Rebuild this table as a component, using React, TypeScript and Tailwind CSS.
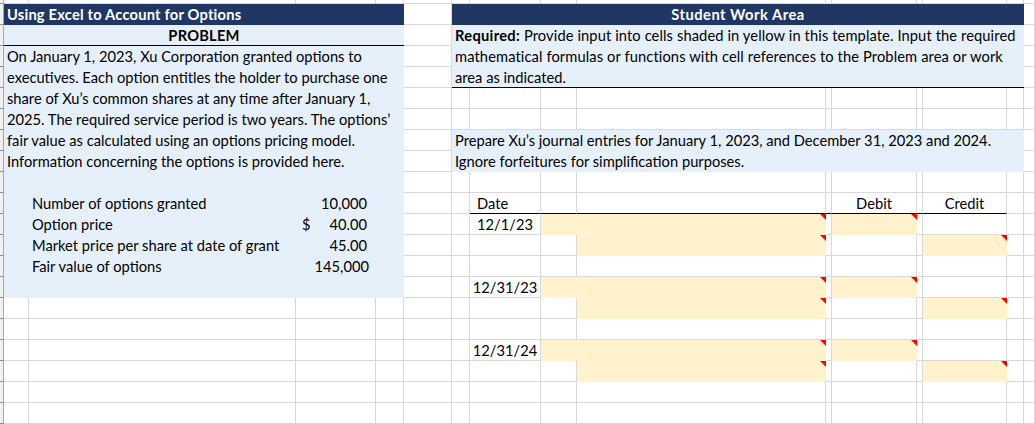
import React from "react";

// gridline cell, same as an empty Excel cell
const GRID = "border-r border-b border-[#d9d9d9]";
const BLUE = "bg-[#e6f0fa]";
const NAVY = "bg-[#203764]";

function Blank({ n = 1 }: { n?: number }) {
  return (
    <>
      {Array.from({ length: n }, (_, i) => (
        <div key={i} className={GRID} />
      ))}
    </>
  );
}

function RowHead() {
  return <div className="bg-[#f1f1f1] border-r border-b border-r-[#a8a8a8] border-b-[#8c8c8c]" />;
}

// red comment marker in the top right corner
function Note() {
  return (
    <svg width="6" height="6" viewBox="0 0 6 6" className="block">
      <polygon points="0,0 6,0 6,6" fill="#ff0000" />
    </svg>
  );
}

function Input({ wide }: { wide?: boolean }) {
  return (
    <div className={`${wide ? "col-span-2" : ""} bg-[#fff2cc] flex justify-end items-start`}>
      <Note />
    </div>
  );
}

function Line({ children, className = "" }: { children?: React.ReactNode; className?: string }) {
  return <div className={`h-[21px] leading-[21px] whitespace-nowrap ${className}`}>{children}</div>;
}

function DataRow({ label, value, dollar, pr }: { label: string; value: string; dollar?: boolean; pr: string }) {
  return (
    <>
      <div className={BLUE} />
      <div className={`${BLUE} pl-[3px] leading-[21px] whitespace-nowrap`}>{label}</div>
      <div className={`${BLUE} flex justify-between leading-[21px] pl-[6px] ${pr}`}>
        <span>{dollar ? "$" : ""}</span>
        <span>{value}</span>
      </div>
      <div className={BLUE} />
    </>
  );
}

// the date cell is centered in column G
function DateCell({ text }: { text?: string }) {
  return <div className={`${GRID} text-center leading-[21px]`}>{text}</div>;
}

export default function App() {
  const paragraph = [
    "On January 1, 2023, Xu Corporation granted options to",
    "executives. Each option entitles the holder to purchase one",
    "share of Xu\u2019s common shares at any time after January 1,",
    "2025. The required service period is two years. The options\u2019",
    "fair value as calculated using an options pricing model.",
    "Information concerning the options is provided here.",
  ];

  return (
    <div className="w-[1035px] h-[424px] overflow-hidden bg-white text-black text-[14.7px] font-['Lato',sans-serif]">
      <div className="grid grid-cols-[4px_25px_267px_80px_28px_48px_18px_71px_36px_249px_6px_85px_6px_84px_17px_11px] grid-rows-[4px_repeat(20,21px)]">
        {/* row 1, partly cut off */}
        <RowHead />
        <Blank n={15} />

        {/* row 2: titles */}
        <RowHead />
        <div className={`col-span-4 ${NAVY} text-white font-bold tracking-[0.2px] pl-[3px] leading-[21px]`}>
          Using Excel to Account for Options
        </div>
        <Blank />
        <div className={`col-span-9 ${NAVY} text-white font-bold tracking-[0.5px] text-center leading-[21px]`}>
          Student Work Area
        </div>
        <Blank />

        {/* row 3 */}
        <RowHead />
        <div className={`col-span-4 ${BLUE} border-b border-black font-bold tracking-[0.2px] text-center leading-[20px]`}>
          PROBLEM
        </div>
        <Blank />
        <div className={`col-span-9 ${BLUE} pl-[3px]`}>
          <Line className="tracking-[0.1px]">
            <span className="font-bold tracking-[0.3px]">Required:</span> Provide input into cells shaded in yellow in this template. Input the required
          </Line>
        </div>
        <Blank />

        {/* row 4 */}
        <RowHead />
        <div className={`col-span-4 ${BLUE} pl-[3px]`}>
          <Line>{paragraph[0]}</Line>
        </div>
        <Blank />
        <div className={`col-span-9 ${BLUE} pl-[3px]`}>
          <Line className="tracking-[0.1px]">mathematical formulas or functions with cell references to the Problem area or work</Line>
        </div>
        <Blank />

        {/* row 5 */}
        <RowHead />
        <div className={`col-span-4 ${BLUE} pl-[3px]`}>
          <Line>{paragraph[1]}</Line>
        </div>
        <Blank />
        <div className={`col-span-9 ${BLUE} pl-[3px] border-b border-black`}>
          <Line className="h-[20px]">area as indicated.</Line>
        </div>
        <Blank />

        {/* rows 6-7 */}
        <RowHead />
        <div className={`col-span-4 ${BLUE} pl-[3px]`}>
          <Line>{paragraph[2]}</Line>
        </div>
        <Blank n={11} />

        <RowHead />
        <div className={`col-span-4 ${BLUE} pl-[3px]`}>
          <Line>{paragraph[3]}</Line>
        </div>
        <Blank n={11} />

        {/* rows 8-9: instructions */}
        <RowHead />
        <div className={`col-span-4 ${BLUE} pl-[3px]`}>
          <Line>{paragraph[4]}</Line>
        </div>
        <Blank />
        <div className={`col-span-9 ${BLUE} pl-[3px]`}>
          <Line>Prepare Xu&rsquo;s journal entries for January 1, 2023, and December 31, 2023 and 2024.</Line>
        </div>
        <Blank />

        <RowHead />
        <div className={`col-span-4 ${BLUE} pl-[3px]`}>
          <Line>{paragraph[5]}</Line>
        </div>
        <Blank />
        <div className={`col-span-9 ${BLUE} pl-[3px]`}>
          <Line>Ignore forfeitures for simplification purposes.</Line>
        </div>
        <Blank />

        {/* row 10 */}
        <RowHead />
        <div className={`col-span-4 ${BLUE}`} />
        <Blank n={11} />

        {/* row 11: table header */}
        <RowHead />
        <DataRow label="Number of options granted" value="10,000" pr="pr-[9px]" />
        <Blank n={2} />
        <div className="border-r border-b border-r-[#d9d9d9] border-b-black pl-[7px] leading-[21px]">Date</div>
        <div className="border-r border-b border-r-[#d9d9d9] border-b-black" />
        <div className="border-r border-b border-r-[#d9d9d9] border-b-black" />
        <div className="border-r border-b border-r-[#d9d9d9] border-b-black" />
        <div className="border-r border-b border-r-[#d9d9d9] border-b-black text-center leading-[21px]">Debit</div>
        <div className="border-r border-b border-r-[#d9d9d9] border-b-black" />
        <div className="border-r border-b border-r-[#d9d9d9] border-b-black text-center leading-[21px]">Credit</div>
        <Blank n={2} />

        {/* row 12 */}
        <RowHead />
        <DataRow label="Option price" value="40.00" dollar pr="pr-[9px]" />
        <Blank n={2} />
        <DateCell text="12/1/23" />
        <Input wide />
        <Blank />
        <Input />
        <Blank n={4} />

        {/* row 13 */}
        <RowHead />
        <DataRow label="Market price per share at date of grant" value="45.00" pr="pr-[9px]" />
        <Blank n={4} />
        <Input />
        <Blank n={3} />
        <Input />
        <Blank n={2} />

        {/* row 14 */}
        <RowHead />
        <DataRow label="Fair value of options" value="145,000" pr="pr-[7px]" />
        <Blank n={11} />

        {/* row 15 */}
        <RowHead />
        <div className={`col-span-4 ${BLUE}`} />
        <Blank n={2} />
        <DateCell text="12/31/23" />
        <Input wide />
        <Blank />
        <Input />
        <Blank n={4} />

        {/* row 16 */}
        <RowHead />
        <Blank n={8} />
        <Input />
        <Blank n={3} />
        <Input />
        <Blank n={2} />

        {/* row 17 */}
        <RowHead />
        <Blank n={15} />

        {/* row 18 */}
        <RowHead />
        <Blank n={6} />
        <DateCell text="12/31/24" />
        <Input wide />
        <Blank />
        <Input />
        <Blank n={4} />

        {/* row 19 */}
        <RowHead />
        <Blank n={8} />
        <Input />
        <Blank n={3} />
        <Input />
        <Blank n={2} />

        {/* rows 20-21 */}
        <RowHead />
        <Blank n={15} />
        <RowHead />
        <Blank n={15} />
      </div>
    </div>
  );
}
